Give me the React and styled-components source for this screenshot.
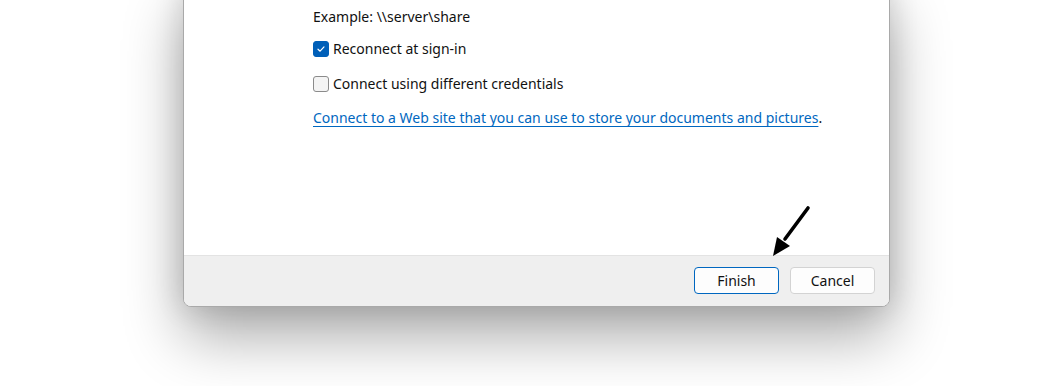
import React from 'react'
import styled, { createGlobalStyle } from 'styled-components'

const GlobalStyle = createGlobalStyle`
  html, body {
    margin: 0;
    padding: 0;
    background: #ffffff;
    overflow: hidden;
  }
  body {
    font-family: "Noto Sans", "Open Sans", sans-serif;
  }
`

const Page = styled.div`
  position: relative;
  display: flow-root;
  width: 1063px;
  height: 386px;
  padding-left: 183px;
  box-sizing: border-box;
  overflow: hidden;
`

const Dialog = styled.div`
  width: 707px;
  margin-top: -20px;
  box-sizing: border-box;
  border: 1px solid #a9a9a9;
  border-radius: 8px;
  background: #ffffff;
  overflow: hidden;
  box-shadow: 0 30px 60px rgba(0, 0, 0, 0.33), 0 0 30px rgba(0, 0, 0, 0.14);
`

const Body = styled.div`
  height: 274px;
  box-sizing: border-box;
  padding: 26px 0 0 129px;
  display: flex;
  flex-direction: column;
  align-items: flex-start;
  font-size: 14px;
  line-height: 20px;
  color: #111111;
`

const Line = styled.div`
  margin-top: ${p => p.$gap || 0}px;
  display: flex;
  align-items: center;
  gap: 4px;
  height: 20px;
  white-space: nowrap;
`

const Box = styled.span`
  width: 16px;
  height: 16px;
  box-sizing: border-box;
  border-radius: 3px;
  display: inline-flex;
  align-items: center;
  justify-content: center;
  border: 1px solid ${p => (p.$checked ? '#005fb8' : '#8b8b8b')};
  background: ${p => (p.$checked ? '#005fb8' : '#f4f4f4')};
`

const LinkText = styled.a`
  color: #0067c0;
  text-decoration: underline;
  text-underline-offset: 3px;
  cursor: pointer;
`

const Footer = styled.div`
  border-top: 1px solid #e3e3e3;
  background: #efefef;
  display: flex;
  justify-content: flex-end;
  gap: 11px;
  padding: 11px 14px 12px;
`

const Button = styled.button`
  width: 85px;
  height: 27px;
  box-sizing: border-box;
  border-radius: 4px;
  font-family: inherit;
  font-size: 14px;
  color: #111111;
  background: #fdfdfd;
  border: 1px solid ${p => (p.$primary ? '#0067c0' : '#d3d3d3')};
  padding: 0;
`

const Arrow = styled.svg`
  position: absolute;
  left: 768px;
  top: 203px;
`

function Checkbox({ checked }) {
  return (
    <Box $checked={checked}>
      {checked && (
        <svg width="10" height="10" viewBox="0 0 10 10">
          <path d="M2 5.2 L4.1 7.2 L8 2.9" fill="none" stroke="#fff" strokeWidth="1.2" strokeLinecap="round" strokeLinejoin="round" />
        </svg>
      )}
    </Box>
  )
}

export default function App() {
  return (
    <Page>
      <GlobalStyle />
      <Dialog>
        <Body>
          <Line>Example: \\server\share</Line>
          <Line $gap={12}>
            <Checkbox checked />
            Reconnect at sign-in
          </Line>
          <Line $gap={15}>
            <Checkbox />
            Connect using different credentials
          </Line>
          <Line $gap={14}>
            <span>
              <LinkText>Connect to a Web site that you can use to store your documents and pictures</LinkText>.
            </span>
          </Line>
        </Body>
        <Footer>
          <Button $primary>Finish</Button>
          <Button>Cancel</Button>
        </Footer>
      </Dialog>
      <Arrow width="46" height="58" viewBox="0 0 46 58">
        <line x1="40" y1="5" x2="17" y2="36" stroke="#000" strokeWidth="3.6" strokeLinecap="round" />
        <polygon points="5,53 9,34 22,43" fill="#000" />
      </Arrow>
    </Page>
  )
}
